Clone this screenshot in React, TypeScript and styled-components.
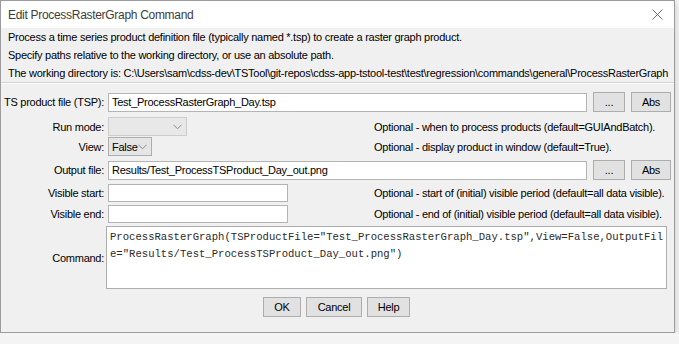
import { ReactNode } from 'react'
import styled, { createGlobalStyle } from 'styled-components'

const GlobalStyle = createGlobalStyle`
  html, body {
    margin: 0;
    padding: 0;
    background: #f4f4f4;
  }
  body {
    font-family: 'Liberation Sans', Arial, sans-serif;
    font-size: 11px;
    letter-spacing: -0.26px;
    color: #000;
  }
`

const Window = styled.div`
  width: 675px;
  height: 333px;
  box-sizing: border-box;
  border: 1px solid #9c9c9c;
  background: #f0f0f0;
  box-shadow: 0 3px 8px rgba(0, 0, 0, 0.18);
  display: flex;
  flex-direction: column;
`

const TitleBar = styled.div`
  height: 27px;
  background: #fff;
  display: flex;
  align-items: center;
  justify-content: space-between;
  padding: 0 11px 0 7px;
`

const Title = styled.div`
  font-size: 12px;
  letter-spacing: -0.3px;
  color: #3c3c3c;
`

const Intro = styled.div`
  padding: 0 7px;
  line-height: 18px;
  white-space: nowrap;
`

const Separator = styled.div`
  height: 0;
  border-top: 1px solid #d4d4d4;
  border-bottom: 1px solid #fbfbfb;
`

const Form = styled.div`
  display: flex;
  flex-direction: column;
  padding-right: 3px;
`

const Row = styled.div<{ $h: number; $top: number }>`
  display: grid;
  grid-template-columns: 103px 1fr;
  column-gap: 4px;
  height: ${(p) => p.$h}px;
  margin-top: ${(p) => p.$top}px;
  align-items: center;
`

const Label = styled.div`
  text-align: right;
  white-space: nowrap;
`

const FieldWithButtons = styled.div`
  display: flex;
  align-items: center;
  height: 100%;
`

const OptionCell = styled.div`
  display: grid;
  grid-template-columns: 266px 1fr;
  align-items: center;
  height: 100%;
`

const TextField = styled.div<{ $w?: number }>`
  box-sizing: border-box;
  width: ${(p) => (p.$w ? `${p.$w}px` : 'auto')};
  flex: ${(p) => (p.$w ? 'none' : '1')};
  height: ${(p) => (p.$w ? 18 : 19)}px;
  border: 1px solid #b4b4b4;
  background: #fff;
  padding: 0 3px;
  display: flex;
  align-items: center;
  white-space: nowrap;
`

const SmallButton = styled.div<{ $w: number }>`
  box-sizing: border-box;
  width: ${(p) => p.$w}px;
  height: 20px;
  margin-left: 6px;
  border: 1px solid #adadad;
  background: #e1e1e1;
  display: flex;
  align-items: center;
  justify-content: center;
`

const Combo = styled.div<{ $w: number; $disabled?: boolean }>`
  box-sizing: border-box;
  width: ${(p) => p.$w}px;
  height: 19px;
  border: 1px solid ${(p) => (p.$disabled ? '#cccccc' : '#adadad')};
  background: ${(p) => (p.$disabled ? '#e8e8e8' : '#e5e5e5')};
  display: flex;
  align-items: center;
  justify-content: space-between;
  padding: 0 4px 0 3px;
`

const Hint = styled.div`
  white-space: nowrap;
`

const CommandArea = styled.div`
  box-sizing: border-box;
  height: 63px;
  margin-right: 4px;
  margin-left: -2px;
  border: 1px solid #adadad;
  background: #fff;
  padding: 2px 3px;
  font-family: 'Liberation Mono', 'Courier New', monospace;
  font-size: 10.6px;
  letter-spacing: 0;
  line-height: 17px;
  white-space: pre;
  overflow: hidden;
  color: #2a2a2a;
  align-self: stretch;
`

const CommandLabel = styled(Label)`
  align-self: center;
`

const ButtonBar = styled.div`
  display: flex;
  justify-content: center;
  gap: 5px;
  margin-top: 8px;
  padding-left: 1px;
`

const DialogButton = styled.div<{ $w: number }>`
  box-sizing: border-box;
  width: ${(p) => p.$w}px;
  height: 20px;
  border: 1px solid #adadad;
  background: #e1e1e1;
  display: flex;
  align-items: center;
  justify-content: center;
`

const Chevron = () => (
  <svg width="9" height="6" viewBox="0 0 9 6">
    <path d="M0.5 0.8 L4.5 4.8 L8.5 0.8" fill="none" stroke="#8a8a8a" strokeWidth="1" />
  </svg>
)

const CloseIcon = () => (
  <svg width="11" height="11" viewBox="0 0 11 11">
    <path d="M0.5 0.5 L10.5 10.5 M10.5 0.5 L0.5 10.5" stroke="#6e6e6e" strokeWidth="1" />
  </svg>
)

const FileRow = ({ label, value, top }: { label: string; value: string; top: number }) => (
  <Row $h={20} $top={top}>
    <Label>{label}</Label>
    <FieldWithButtons>
      <TextField>{value}</TextField>
      <SmallButton $w={32}>...</SmallButton>
      <SmallButton $w={40}>Abs</SmallButton>
    </FieldWithButtons>
  </Row>
)

const OptionRow = ({ label, control, hint, top }: { label: string; control: ReactNode; hint: string; top: number }) => (
  <Row $h={19} $top={top}>
    <Label>{label}</Label>
    <OptionCell>
      <div>{control}</div>
      <Hint>{hint}</Hint>
    </OptionCell>
  </Row>
)

export default function App() {
  return (
    <>
      <GlobalStyle />
      <Window>
        <TitleBar>
          <Title>Edit ProcessRasterGraph Command</Title>
          <CloseIcon />
        </TitleBar>
        <Intro>
          <div>Process a time series product definition file (typically named *.tsp) to create a raster graph product.</div>
          <div>Specify paths relative to the working directory, or use an absolute path.</div>
          <div>
            The working directory is:
            C:\Users\sam\cdss-dev\TSTool\git-repos\cdss-app-tstool-test\test\regression\commands\general\ProcessRasterGraph
          </div>
        </Intro>
        <Separator />
        <Form>
          <FileRow label="TS product file (TSP):" value="Test_ProcessRasterGraph_Day.tsp" top={8} />
          <OptionRow
            label="Run mode:"
            top={5}
            control={
              <Combo $w={79} $disabled>
                <span />
                <Chevron />
              </Combo>
            }
            hint="Optional - when to process products (default=GUIAndBatch)."
          />
          <OptionRow
            label="View:"
            top={1}
            control={
              <Combo $w={44}>
                <span>False</span>
                <Chevron />
              </Combo>
            }
            hint="Optional - display product in window (default=True)."
          />
          <FileRow label="Output file:" value="Results/Test_ProcessTSProduct_Day_out.png" top={4} />
          <OptionRow
            label="Visible start:"
            top={3}
            control={<TextField $w={180} />}
            hint="Optional - start of (initial) visible period (default=all data visible)."
          />
          <OptionRow
            label="Visible end:"
            top={2}
            control={<TextField $w={180} />}
            hint="Optional - end of (initial) visible period (default=all data visible)."
          />
          <Row $h={63} $top={3}>
            <CommandLabel>Command:</CommandLabel>
            <CommandArea>
              {'ProcessRasterGraph(TSProductFile="Test_ProcessRasterGraph_Day.tsp",View=False,OutputFil\ne="Results/Test_ProcessTSProduct_Day_out.png")'}
            </CommandArea>
          </Row>
          <ButtonBar>
            <DialogButton $w={38}>OK</DialogButton>
            <DialogButton $w={56}>Cancel</DialogButton>
            <DialogButton $w={43}>Help</DialogButton>
          </ButtonBar>
        </Form>
      </Window>
    </>
  )
}
